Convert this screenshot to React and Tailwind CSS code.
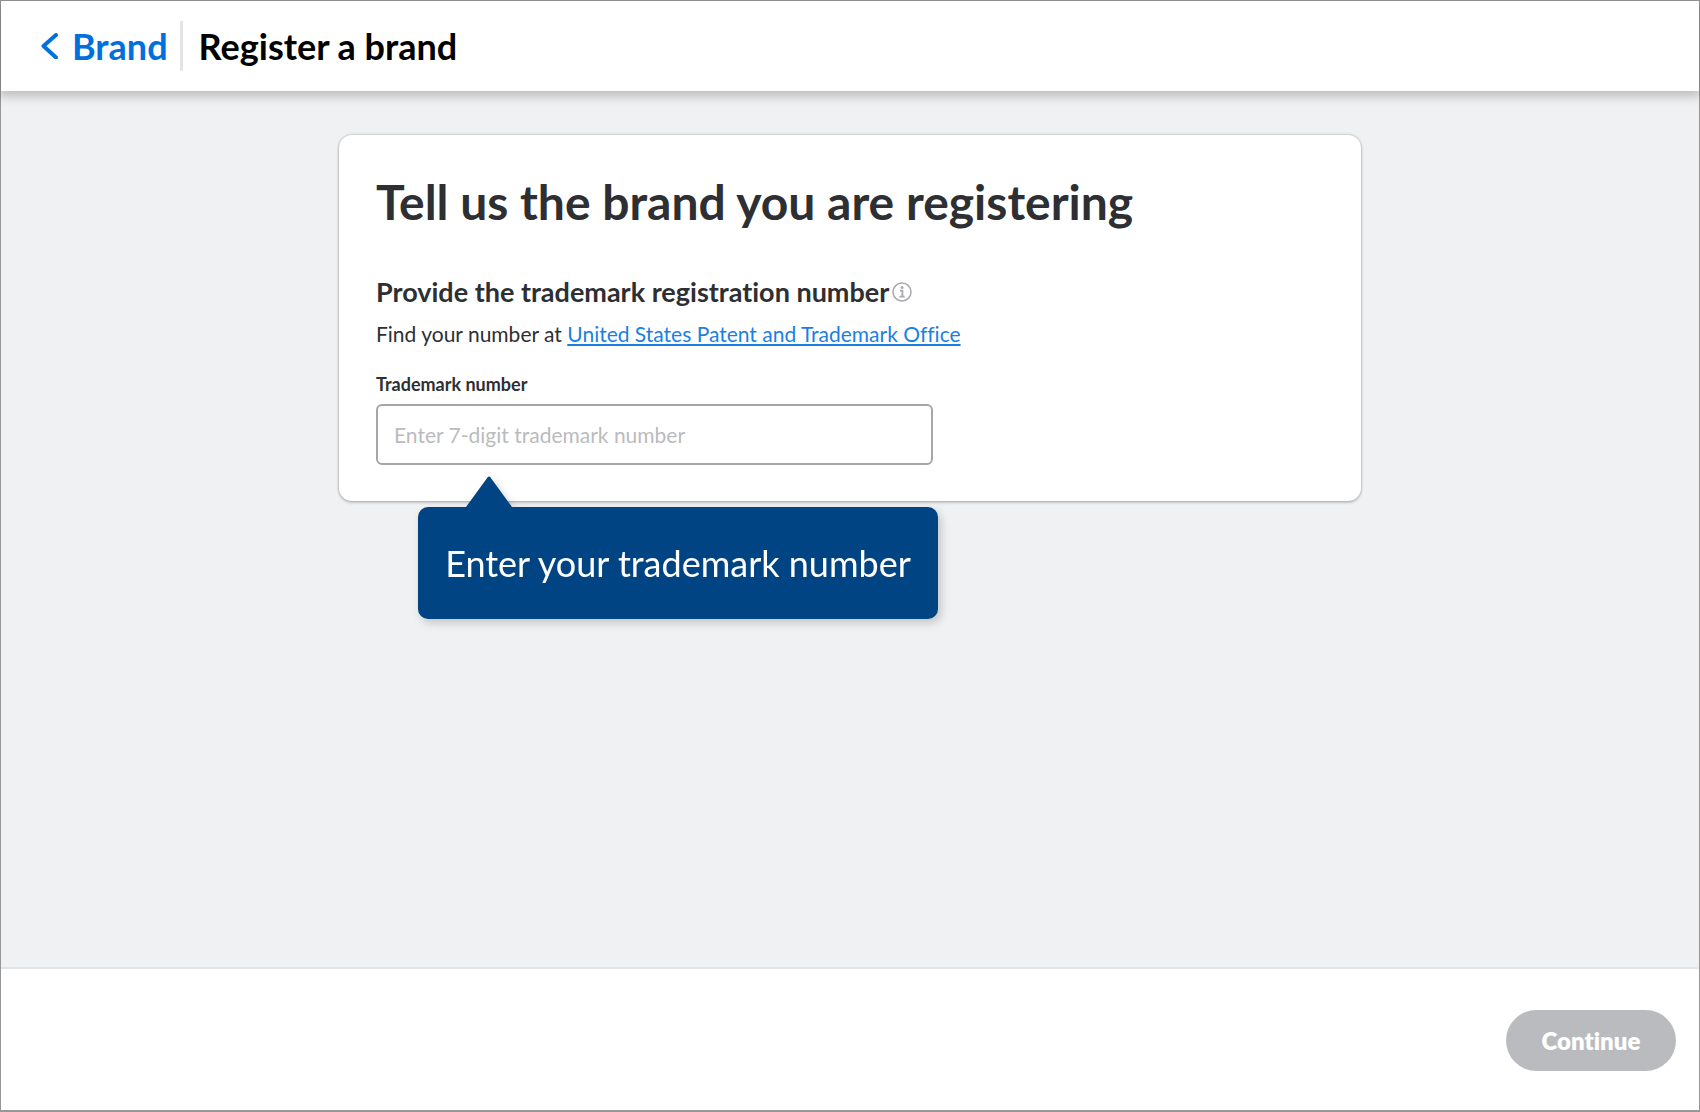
import React, { useState } from "react";

const BackIcon = () => (
  <svg width="17" height="26" viewBox="0 0 17 26" fill="none" aria-hidden="true">
    <path d="M15 2 L2.5 13 L15 24.5" stroke="#0071dc" strokeWidth="4" strokeLinecap="round" strokeLinejoin="round" />
  </svg>
);

const InfoIcon = () => (
  <svg width="20" height="20" viewBox="0 0 20 20" fill="none" aria-hidden="true">
    <circle cx="10" cy="10" r="9" stroke="#a9aaad" strokeWidth="1.5" />
    <circle cx="10" cy="5.6" r="1.5" fill="#a9aaad" />
    <path d="M8 8.6 H10.4 V14.4 M7.4 14.6 H12.6" stroke="#a9aaad" strokeWidth="1.9" />
  </svg>
);

const Header = () => (
  <header className="relative z-10 flex h-[90px] items-center bg-white pl-10 text-4xl font-bold shadow-[0_4px_9px_2px_rgba(0,0,0,0.2)]">
    <a href="#brand" className="flex items-center gap-[14px] text-[#0071dc]">
      <BackIcon />
      Brand
    </a>
    <div className="mr-4 ml-3 h-[50px] w-[3px] bg-[#e3e4e5]" />
    <h1 className="text-black">Register a brand</h1>
  </header>
);

//Hint bubble below the input
const Hint = ({ children }) => (
  <div role="tooltip" className="absolute top-[72px] left-[42px] w-[520px] drop-shadow-[3px_4px_4px_rgba(0,0,0,0.18)]">
    <svg className="ml-12" width="46" height="31" viewBox="0 0 46 31" aria-hidden="true">
      <path d="M0 31 L21.5 1.5 Q23 -0.5 24.5 1.5 L46 31 Z" fill="#004483" />
    </svg>
    <div className="flex h-28 items-center justify-center rounded-[10px] bg-[#004483] text-4xl whitespace-nowrap text-white">
      {children}
    </div>
  </div>
);

const App = () => {
  const [number, setNumber] = useState("");

  return (
    <div className="flex min-h-screen flex-col border border-b-2 border-[#979797] bg-[#f0f1f3] font-['Lato',sans-serif] text-[#2e2f32] [font-variant-ligatures:none]">
      <Header />
      <main className="flex-1 px-6 pt-11">
        <section className="mx-auto w-full max-w-[1022px] rounded-[13px] bg-white px-[37px] pt-[35px] pb-9 shadow-[0_0_2px_1px_rgba(0,0,0,0.15),0_2px_3px_0_rgba(0,0,0,0.15)]">
          <h2 className="text-5xl leading-[64px] font-bold">Tell us the brand you are registering</h2>
          <div className="mt-10 flex items-center gap-[3px]">
            <h3 className="text-[27px] leading-9 font-bold">Provide the trademark registration number</h3>
            <button type="button" aria-label="About the registration number">
              <InfoIcon />
            </button>
          </div>
          <p className="mt-2 text-[21px] leading-8">
            Find your number at{" "}
            <a href="#uspto" className="text-[#1a7fe4] underline">United States Patent and Trademark Office</a>
          </p>
          <label htmlFor="trademark" className="mt-[22px] block text-[18px] leading-6 font-bold">Trademark number</label>
          <div className="relative mt-2 max-w-[557px]">
            <input
              id="trademark"
              type="text"
              value={number}
              onChange={(e) => setNumber(e.target.value)}
              placeholder="Enter 7-digit trademark number"
              className="block h-[61px] w-full rounded-md border-2 border-[#a5a6aa] bg-white px-4 text-[21px] placeholder:text-[#babbbe]"
            />
            <Hint>Enter your trademark number</Hint>
          </div>
        </section>
      </main>
      <footer className="flex h-[143px] items-center justify-end border-t-2 border-[#e3e4e5] bg-white pt-0.5 pr-[23px]">
        <button type="button" disabled={number.length !== 7} className="h-[61px] w-[170px] rounded-full bg-[#babbbe] text-2xl font-extrabold text-white">
          Continue
        </button>
      </footer>
    </div>
  );
};

export default App;
